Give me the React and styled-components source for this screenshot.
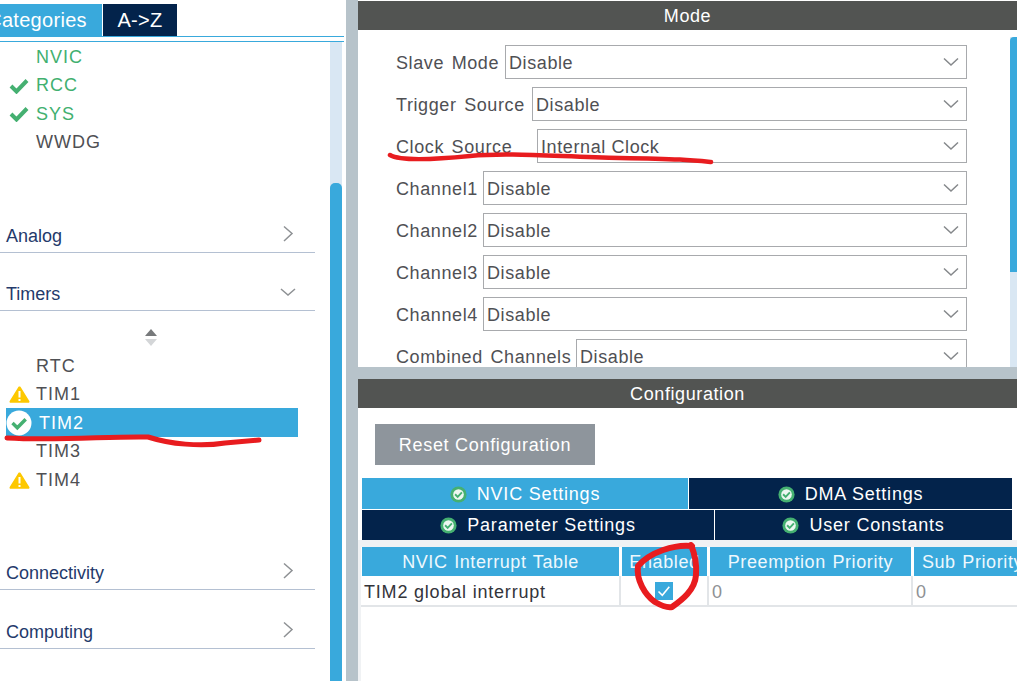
import React from 'react'
import styled, { createGlobalStyle } from 'styled-components'

const GlobalStyle = createGlobalStyle`
  html, body { margin: 0; padding: 0; background: #fff; }
  body { font-family: "Liberation Sans", Arial, sans-serif; }
`

const Screen = styled.div`
  position: relative;
  display: flex;
  width: 1017px;
  height: 681px;
  overflow: hidden;
  background: #fff;
  font-size: 18px;
  color: #4f5054;
`

const LeftPanel = styled.div`
  width: 342px;
  flex: none;
  display: flex;
  flex-direction: column;
  padding-top: 4px;
`

const TabBar = styled.div`
  display: flex;
  height: 32px;
  flex: none;
  gap: 1px;
  margin-left: -14px;
`

const TopTab = styled.div`
  display: flex;
  align-items: center;
  justify-content: center;
  width: ${(p) => p.$width}px;
  box-sizing: border-box;
  padding-right: ${(p) => p.$inset || 0}px;
  background: ${(p) => (p.$active ? '#39a9dc' : '#03234b')};
  color: #fff;
  font-size: 20px;
  letter-spacing: 0.3px;
`

const DoubleRule = styled.div`
  height: 2px;
  flex: none;
  margin-right: -2px;
  border-top: 1px solid #39a9dc;
  border-bottom: 1px solid #39a9dc;
  padding-top: 2px;
  box-sizing: content-box;
`

const SideBody = styled.div`
  flex: 1;
  min-height: 0;
  display: flex;
`

const SideList = styled.div`
  width: 330px;
  flex: none;
`

const Track = styled.div`
  width: 12px;
  flex: none;
  background: #d9e7f3;
  padding-top: 141px;
`

const Thumb = styled.div`
  height: 100%;
  background: #39a9dc;
  border-radius: 5px 5px 0 0;
`

const PeripheralRow = styled.div`
  display: flex;
  align-items: center;
  height: 28.5px;
  width: 292px;
  margin-left: 6px;
  padding-top: 2px;
  box-sizing: border-box;
  background: ${(p) => (p.$selected ? '#39a9dc' : 'transparent')};
  color: ${(p) => (p.$selected ? '#fff' : p.$green ? '#41b06f' : '#4f5054')};
  letter-spacing: 1px;
`

const IconSlot = styled.span`
  width: ${(p) => (p.$selected ? 33 : 30)}px;
  flex: none;
  display: flex;
  align-items: center;
  justify-content: ${(p) => (p.$selected ? 'flex-start' : 'center')};
  padding-right: ${(p) => (p.$selected ? 0 : 4)}px;
  box-sizing: border-box;
`

const Section = styled.div`
  display: flex;
  align-items: flex-end;
  justify-content: space-between;
  height: ${(p) => p.$height || 58}px;
  width: 315px;
  box-sizing: border-box;
  margin-top: ${(p) => p.$top || 0}px;
  padding: 0 19px 4px 6px;
  border-bottom: 1px solid #b4c0d2;
  color: #243a6b;
  line-height: 24px;
`

const Chevron = styled.svg`
  width: 16px;
  height: 18px;
  margin-bottom: 5px;
  fill: none;
  stroke: #8e9194;
  stroke-width: 1.5;
`

const Sorter = styled.div`
  display: flex;
  justify-content: center;
  width: 301px;
  height: 40px;
  padding-top: 18px;
  box-sizing: border-box;
`

const Gutter = styled.div`
  width: 12px;
  flex: none;
  margin-left: 4px;
  background: #b7c3ca;
`

const RightColumn = styled.div`
  flex: 1;
  min-width: 0;
  display: flex;
  flex-direction: column;
`

const ModePanel = styled.section`
  height: 366px;
  margin-top: 1px;
  flex: none;
  display: flex;
  flex-direction: column;
  overflow: hidden;
`

const PanelHeader = styled.header`
  height: 29px;
  flex: none;
  box-sizing: border-box;
  padding-top: 2px;
  display: flex;
  align-items: center;
  justify-content: center;
  background: #525452;
  color: #fff;
  letter-spacing: 0.6px;
`

const ModeBody = styled.div`
  flex: 1;
  min-height: 0;
  display: flex;
`

const FormRows = styled.div`
  flex: 1;
  display: flex;
  flex-direction: column;
  gap: 8px;
  padding: 15px 43px 0 38px;
`

const FormRow = styled.div`
  display: grid;
  grid-template-columns: ${(p) => p.$label}px 1fr;
  height: 34px;
  flex: none;
`

const FieldLabel = styled.label`
  display: flex;
  align-items: center;
  padding-top: 2px;
  white-space: nowrap;
  letter-spacing: 0.6px;
  word-spacing: 2px;
`

const SelectBox = styled.div`
  display: flex;
  align-items: center;
  justify-content: space-between;
  border: 1px solid #a8aaad;
  box-sizing: border-box;
  padding: 2px 7px 0 3px;
  letter-spacing: 0.6px;
`

const ArrowDown = styled.svg`
  width: 16px;
  height: 10px;
  margin-bottom: 2px;
  fill: none;
  stroke: #85888b;
  stroke-width: 1.5;
`

const ModeScroll = styled.div`
  width: 7px;
  flex: none;
  margin-top: 7px;
  background: #d9e7f3;
`

const ModeThumb = styled.div`
  height: 235px;
  background: #39a9dc;
  border-radius: 4px 0 0 0;
`

const HorizontalGutter = styled.div`
  height: 12px;
  flex: none;
  background: #b7c3ca;
`

const ConfigPanel = styled.section`
  flex: 1;
  min-height: 0;
  display: flex;
  flex-direction: column;
  overflow: hidden;
`

const ResetButton = styled.button`
  align-self: flex-start;
  width: 220px;
  height: 41px;
  margin: 16px 0 13px 17px;
  padding: 2px 0 0;
  border: 0;
  background: #8e959c;
  color: #fff;
  font: inherit;
  letter-spacing: 0.7px;
`

const SettingsRow = styled.div`
  display: grid;
  grid-template-columns: ${(p) => p.$columns};
  gap: 1px;
  width: 650px;
  height: ${(p) => p.$height}px;
  margin-left: 4px;
  margin-bottom: ${(p) => p.$bottom || 0}px;
`

const SettingsTab = styled.div`
  display: flex;
  align-items: center;
  justify-content: center;
  gap: 10px;
  padding-top: ${(p) => p.$drop || 0}px;
  box-sizing: border-box;
  background: ${(p) => (p.$active ? '#39a9dc' : '#03234b')};
  color: #fff;
  letter-spacing: 0.8px;
`

const TableArea = styled.div`
  flex: 1;
  min-height: 0;
  border-left: 3px solid #f0f2f4;
`

const TableStrip = styled.div`
  height: 7px;
  background: #f0f2f4;
`

const NvicTable = styled.div`
  display: grid;
  grid-template-columns: 260px 88px 204px 120px;
  width: 672px;
`

const HeadCell = styled.div`
  height: 29px;
  margin-left: 1px;
  border-right: 2px solid #fff;
  padding-top: 2px;
  box-sizing: border-box;
  display: flex;
  align-items: center;
  justify-content: center;
  background: #39a9dc;
  background-clip: padding-box;
  color: #eef8fd;
  letter-spacing: 0.6px;
  word-spacing: 1px;
  white-space: nowrap;
  overflow: hidden;
`

const BodyCell = styled.div`
  height: 31px;
  display: flex;
  align-items: center;
  justify-content: ${(p) => (p.$center ? 'center' : 'flex-start')};
  padding: 4px 0 0 ${(p) => (p.$center ? 0 : 3)}px;
  box-sizing: border-box;
  border-bottom: 2px solid #e2e5e8;
  border-right: 2px solid #e2e5e8;
  color: ${(p) => (p.$muted ? '#8e9194' : '#33343a')};
  letter-spacing: 0.8px;
`

const CheckBox = styled.span`
  display: flex;
  align-items: center;
  justify-content: center;
  width: 18px;
  height: 18px;
  margin-bottom: 4px;
  background: #39a9dc;
`

const Annotations = styled.svg`
  position: absolute;
  left: 0;
  top: 0;
  width: 1017px;
  height: 681px;
  pointer-events: none;
  fill: none;
  stroke: #e81c1f;
  stroke-linecap: round;
  stroke-linejoin: round;
`

const GreenTick = () => (
  <svg width="20" height="16" viewBox="0 0 20 16">
    <path d="M2 8l5.5 5.5L18 2.5" fill="none" stroke="#45b071" strokeWidth="4" />
  </svg>
)

const RoundTick = ({ size = 17, ring = '#45b071' }) => (
  <svg width={size} height={size} viewBox="0 0 16 16">
    <circle cx="8" cy="8" r="7.6" fill={ring} />
    <circle cx="8" cy="8" r="5" fill="#fff" opacity="0.9" />
    <path d="M4.8 7.8l2.4 2.4 4-4.2" fill="none" stroke={ring} strokeWidth="1.8" />
  </svg>
)

const SelectedTick = () => (
  <svg width="26" height="26" viewBox="0 0 26 26">
    <circle cx="13" cy="13" r="12.5" fill="#fff" />
    <path d="M6.5 13l4.8 4.8 8.4-8.6" fill="none" stroke="#45b071" strokeWidth="3.4" />
  </svg>
)

const Warning = () => (
  <svg width="21" height="17" viewBox="0 0 21 17">
    <path d="M10.5 0.5c.8 0 1.2.5 1.6 1.2l8.2 13.2c.5.9 0 1.9-1 1.9H1.7c-1 0-1.5-1-1-1.9L8.9 1.7c.4-.7.8-1.2 1.6-1.2z" fill="#fdc800" />
    <path d="M10.5 5v6.5M10.5 13v2" stroke="#fff" strokeWidth="2" />
  </svg>
)

const ChevronRight = () => (
  <Chevron viewBox="0 0 16 18"><path d="M4 1.5L12 8.5L4 16" /></Chevron>
)

const ChevronDown = () => (
  <Chevron viewBox="0 0 16 18"><path d="M1 6L8 12L15 6" /></Chevron>
)

const peripherals = [
  { name: 'NVIC', green: true },
  { name: 'RCC', green: true, icon: <GreenTick /> },
  { name: 'SYS', green: true, icon: <GreenTick /> },
  { name: 'WWDG' },
]

const timers = [
  { name: 'RTC' },
  { name: 'TIM1', icon: <Warning /> },
  { name: 'TIM2', selected: true, icon: <SelectedTick /> },
  { name: 'TIM3' },
  { name: 'TIM4', icon: <Warning /> },
]

const modeFields = [
  { label: 'Slave Mode', start: 109, value: 'Disable' },
  { label: 'Trigger Source', start: 136, value: 'Disable' },
  { label: 'Clock Source', start: 141, value: 'Internal Clock' },
  { label: 'Channel1', start: 87, value: 'Disable' },
  { label: 'Channel2', start: 87, value: 'Disable' },
  { label: 'Channel3', start: 87, value: 'Disable' },
  { label: 'Channel4', start: 87, value: 'Disable' },
  { label: 'Combined Channels', start: 180, value: 'Disable' },
]

function Peripheral({ item }) {
  return (
    <PeripheralRow $selected={item.selected} $green={item.green}>
      <IconSlot $selected={item.selected}>{item.icon}</IconSlot>
      {item.name}
    </PeripheralRow>
  )
}

export default function App() {
  return (
    <Screen>
      <GlobalStyle />
      <LeftPanel>
        <TabBar>
          <TopTab $active $width={116} $inset={14}>Categories</TopTab>
          <TopTab $width={74}>A-&gt;Z</TopTab>
        </TabBar>
        <DoubleRule />
        <SideBody>
          <SideList>
            {peripherals.map((item) => <Peripheral key={item.name} item={item} />)}
            <Section $top={39}>Analog<ChevronRight /></Section>
            <Section>Timers<ChevronDown /></Section>
            <Sorter>
              <svg width="12" height="17" viewBox="0 0 12 17">
                <path d="M6 0L12 7H0z" fill="#77797b" />
                <path d="M6 17L12 10H0z" fill="#d4d6d8" />
              </svg>
            </Sorter>
            {timers.map((item) => <Peripheral key={item.name} item={item} />)}
            <Section $top={38}>Connectivity<ChevronRight /></Section>
            <Section $height={59}>Computing<ChevronRight /></Section>
            <Section $height={59}><span /><ChevronRight /></Section>
          </SideList>
          <Track><Thumb /></Track>
        </SideBody>
      </LeftPanel>
      <Gutter />
      <RightColumn>
        <ModePanel>
          <PanelHeader>Mode</PanelHeader>
          <ModeBody>
            <FormRows>
              {modeFields.map((field) => (
                <FormRow key={field.label} $label={field.start}>
                  <FieldLabel>{field.label}</FieldLabel>
                  <SelectBox>
                    {field.value}
                    <ArrowDown viewBox="0 0 16 10"><path d="M1 1.5L8 8L15 1.5" /></ArrowDown>
                  </SelectBox>
                </FormRow>
              ))}
            </FormRows>
            <ModeScroll><ModeThumb /></ModeScroll>
          </ModeBody>
        </ModePanel>
        <HorizontalGutter />
        <ConfigPanel>
          <PanelHeader>Configuration</PanelHeader>
          <ResetButton>Reset Configuration</ResetButton>
          <SettingsRow $columns="326px 323px" $height={31} $bottom={1}>
            <SettingsTab $active $drop={2}><RoundTick />NVIC Settings</SettingsTab>
            <SettingsTab $drop={2}><RoundTick />DMA Settings</SettingsTab>
          </SettingsRow>
          <SettingsRow $columns="352px 297px" $height={30}>
            <SettingsTab><RoundTick />Parameter Settings</SettingsTab>
            <SettingsTab><RoundTick />User Constants</SettingsTab>
          </SettingsRow>
          <TableArea>
            <TableStrip />
            <NvicTable>
              <HeadCell>NVIC Interrupt Table</HeadCell>
              <HeadCell>Enabled</HeadCell>
              <HeadCell>Preemption Priority</HeadCell>
              <HeadCell>Sub Priority</HeadCell>
              <BodyCell>TIM2 global interrupt</BodyCell>
              <BodyCell $center>
                <CheckBox>
                  <svg width="14" height="12" viewBox="0 0 14 12">
                    <path d="M1.5 6.5l3.8 3.8 7-8.5" fill="none" stroke="#fff" strokeWidth="1.6" />
                  </svg>
                </CheckBox>
              </BodyCell>
              <BodyCell $muted>0</BodyCell>
              <BodyCell $muted>0</BodyCell>
            </NvicTable>
          </TableArea>
        </ConfigPanel>
      </RightColumn>
      <Annotations viewBox="0 0 1017 681">
        <path strokeWidth="4.5" d="M390 155C400 161 430 160 470 156S560 157 620 158S690 160 711 162" />
        <path strokeWidth="5" d="M7 438C60 441 110 436 148 437C170 444 200 447 225 443L259 440" />
        <path strokeWidth="6" d="M692 546C675 544 650 552 638 566C636 580 645 595 655 602C662 606 668 608 672 607C682 600 695 590 696 575C697 562 694 552 691 545Z" />
      </Annotations>
    </Screen>
  )
}
